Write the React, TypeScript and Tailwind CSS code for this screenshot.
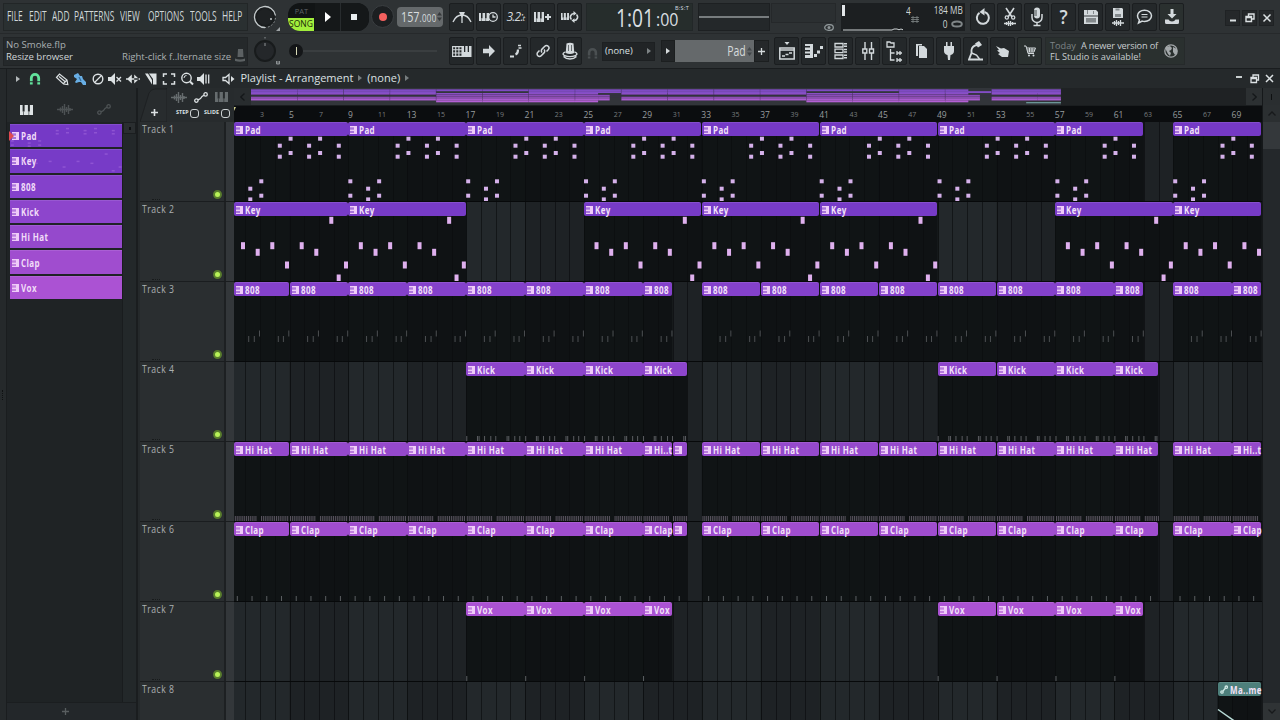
import type { ReactNode } from 'react'
import { clsx } from 'clsx'

const BAR = 14.73
const GRID_W = 1028
const barX = (bar: number) => (bar - 1) * BAR - 3.4

type Clip = [start: number, end: number, label?: string]
type Note = [x: number, y: number]
interface Track {
  name: string
  color: string
  header: string
  clips: Clip[]
  notes: Note[]
  size: Note
  noteColor: string
}

// four-bar clips from start, the last one cut at end
function run(start: number, end: number): Clip[] {
  const out: Clip[] = []
  for (let b = start; b < end; b += 4) out.push([b, Math.min(b + 4, end)])
  return out
}

const padNotes: Note[] = [
  [1.9, 59.3], [1.9, 73.7], [19.7, 66.7], [19.7, 77.4], [30.7, 59.3], [30.7, 73.7],
  [49.2, 23.7], [49.2, 34.7], [60, 16.7], [60, 31], [78.5, 23.7], [78.5, 34.7],
  [89.5, 16.7], [89.5, 31], [108.2, 23.7], [108.2, 34.7],
]
const keyNotes: Note[] = [
  [12.4, 43.7], [27.1, 50.3], [41.7, 43.7], [56.4, 63], [71.1, 43.7],
  [85.7, 50.3], [100.7, 18.3], [108.1, 76], [115.4, 63],
]
const bassNotes: Note[] = [[18.1, 57], [23.7, 57], [28.9, 51.5], [47.7, 57], [52.8, 57], [58.2, 51.5]]
const kickNotes: Note[] = [0.5, 11.2, 12.8, 18.3, 24.5, 29.5, 40.8, 42.5, 48.5, 53.5].map(x => [x, 76.5])
const hatNotes: Note[] = Array.from({ length: 31 }, (_, i): Note => [1 + i * 1.87, 76.5]).filter(([x]) => x < 27 || x > 29.5)
const clapNotes: Note[] = [0, 1, 2, 3].map(i => [6.7 + i * BAR, 76.5])

const hatClips: Clip[] = [
  ...run(1, 29), [29, 31, 'Hi..t'], [31, 32, ''], ...run(33, 64), [65, 69], [69, 71, 'Hi..t'],
]
const clapClips: Clip[] = hatClips.map(([s, e, l]) => [s, e, l === 'Hi..t' ? 'Clap' : l])

const tracks: Track[] = [
  { name: 'Pad', color: '#7f4bc4', header: 'bg-[#7539c6]', clips: [[1, 9], [9, 17], [17, 25], [25, 33], [33, 41], [41, 49], [49, 57], [57, 63], [65, 71]], notes: padNotes, size: [4, 4], noteColor: '#d5b1ea' },
  { name: 'Key', color: '#824dc6', header: 'bg-[#773bc7]', clips: [[1, 9], [9, 17], [25, 33], [33, 41], [41, 49], [57, 65], [65, 71]], notes: keyNotes, size: [4, 7], noteColor: '#dfb0ee' },
  { name: '808', color: '#8a4fc6', header: 'bg-[#8441cb]', clips: [...run(1, 31), ...run(33, 63), [65, 69], [69, 71]], notes: bassNotes, size: [1, 6], noteColor: '#4c4f52' },
  { name: 'Kick', color: '#9a53cc', header: 'bg-[#8d45cc]', clips: [...run(17, 32), ...run(49, 64)], notes: kickNotes, size: [1, 5], noteColor: '#5b5d61' },
  { name: 'Hi Hat', color: '#a156cd', header: 'bg-[#9549cc]', clips: hatClips, notes: hatNotes, size: [1, 5], noteColor: '#5a5560' },
  { name: 'Clap', color: '#aa5bd0', header: 'bg-[#a04dcf]', clips: clapClips, notes: clapNotes, size: [1, 5], noteColor: '#5b5f62' },
  { name: 'Vox', color: '#b360d4', header: 'bg-[#ab52d3]', clips: [...run(17, 31), ...run(49, 63)], notes: [[0.5, 76.5]], size: [1, 5], noteColor: '#5b5f62' },
]

const master: Track = { name: 'Ma..me', color: '#7fb5b5', header: 'bg-[#4d7f7b]', clips: [[68, 71]], notes: [], size: [1, 1], noteColor: '#fff' }

function Svg({ w = 18, h = 18, children, className }: { w?: number; h?: number; children: ReactNode; className?: string }) {
  return (
    <svg width={w} height={h} viewBox={`0 0 ${w} ${h}`} fill="none" stroke="currentColor" strokeWidth="1.3" className={clsx('shrink-0', className)}>
      {children}
    </svg>
  )
}

const solid = { fill: 'currentColor', stroke: 'none' }

function Magnet({ className, w = 13 }: { className?: string; w?: number }) {
  return (
    <svg width={w} height={w} viewBox="0 0 13 13" fill="none" stroke="currentColor" strokeWidth="3" className={className}>
      <path d="M2.5 9V5.5a4 4 0 0 1 8 0V9" />
      <path d="M2.5 10v2.4M10.5 10v2.4" />
    </svg>
  )
}

function Piano({ w = 13, h = 10 }: { w?: number; h?: number }) {
  return (
    <svg width={w} height={h} viewBox="0 0 13 10" preserveAspectRatio="none" fill="currentColor" className="shrink-0">
      <path d="M0 0h2.600v6.500h2V0h3.300v6.500h2V0H13v10H0z" />
      <path d="M3.300 6.500h.6V10h-.6zM8.600 6.500h.6V10h-.6z" fill="#25292b" />
    </svg>
  )
}

function Wave() {
  return (
    <Svg w={16} h={11}>
      <path d="M0 5.5h16M3.5 3.5v4M5.5 2v7M7.5 0v11M9.5 3v5M11.5 1v9M13 4v3" strokeWidth="1.4" />
    </Svg>
  )
}

function Automation() {
  return (
    <Svg w={14} h={11}>
      <circle cx="2.4" cy="8.6" r="1.7" />
      <circle cx="11.6" cy="2.4" r="1.7" />
      <path d="M4 7.8l2.5-1.2 1.5-2.2L10 3.3" />
    </Svg>
  )
}

function PatternIcon() {
  return (
    <svg width="7" height="8" viewBox="0 0 7 8" className="shrink-0" fill="#efccf8">
      <path d="M0 0h7v8H0V7h4V5H0V3.500h4V1.500H0z" />
      <path d="M0 1.500h4v2H0zM0 5h4v2H0z" opacity="0.400" />
    </svg>
  )
}

function ToolButton({ children, green }: { children: ReactNode; green?: boolean }) {
  return (
    <div className={clsx('w-[25px] h-[28px] shrink-0 flex items-center justify-center rounded-[2px] border border-[#1b1e20] text-[#d3d9dc]', green ? 'bg-[#2a302f]' : 'bg-[#24282a]')}>
      {children}
    </div>
  )
}

function MenuBar() {
  const items: [string, string][] = [
    ['FILE', 'w-[22px]'], ['EDIT', 'w-[23px]'], ['ADD', 'w-[22px]'], ['PATTERNS', 'w-[46px]'],
    ['VIEW', 'w-[27.5px]'], ['OPTIONS', 'w-[42px]'], ['TOOLS', 'w-[32.5px]'], ['HELP', 'w-[22px]'],
  ]
  return (
    <div className="w-[245px] h-[28px] ml-[3px] pl-[3px] pb-[2px] shrink-0 flex items-center bg-[#2a3031] border border-[#222627] text-[#d0d7d9]">
      {items.map(([label, width]) => (
        <div key={label} className={clsx('shrink-0', width)}>
          <span className="block w-max origin-left scale-x-[0.6] text-[14px] leading-4 whitespace-nowrap">{label}</span>
        </div>
      ))}
    </div>
  )
}

function Transport() {
  return (
    <div className="w-[81px] h-[28px] ml-[14px] shrink-0 flex rounded-[12px] overflow-hidden bg-[#111415] text-white">
      <div className="w-[27px] flex flex-col">
        <div className="h-[15px] pt-[2px] text-center text-[7.5px] leading-[12px] text-[#5d6265]">PAT</div>
        <div className="h-[13px] w-[26px] rounded-bl-[9px] bg-[#a2ee3c] text-center text-[8.5px] leading-[12px] text-[#1c2a08]">SONG</div>
      </div>
      <div className="w-[26px] flex items-center justify-center border-r border-[#282c2e] bg-[#151819]">
        <Svg w={6} h={10}><path d="M0 0l6 5-6 5z" {...solid} /></Svg>
      </div>
      <div className="flex-1 flex items-center justify-center bg-[#151819]">
        <div className="w-[6px] h-[6px] bg-[#e8edef] -ml-[2px]" />
      </div>
    </div>
  )
}

function TopRow() {
  return (
    <div className="h-[34px] flex items-center border-b border-[#26292b]">
      <MenuBar />
      <div className="w-[35px] ml-[1px] shrink-0 flex justify-center items-center">
        <Svg w={30} h={30} className="text-[#c2c8ca] -ml-[3px]">
          <circle cx="15" cy="15" r="9" fill="#1e2123" stroke="#191c1d" strokeWidth="2" />
          <path d="M15 25.500A10.500 10.500 0 1 1 25.300 13" strokeWidth="1.300" />
          <path d="M15 25.500A10.500 10.500 0 0 0 25.300 13" strokeWidth="1" strokeDasharray="1 2.500" />
          <path d="M20 17h2" strokeWidth="1.500" />
          <path d="M30 25v4h-4z" {...solid} fill="#9da2a4" />
        </Svg>
      </div>
      <div className="-ml-[10px]"><Transport /></div>
      <div className="w-[23px] h-[23px] ml-[2px] shrink-0 rounded-full bg-[#1c1f21] border border-[#3b3f42] flex items-center justify-center">
        <div className="w-2 h-2 rounded-full bg-[#f4605e]" />
      </div>
      <div className="w-[46px] h-[20px] ml-[3px] shrink-0 rounded-[4px] bg-[#65696b] flex items-center pl-1 text-[#d7dcde]">
        <span className="inline-block w-[36px] shrink-0">
          <span className="block w-max origin-left scale-x-[0.72] text-[15px] leading-5 whitespace-nowrap">157<span className="text-[11px] tracking-[0.5px]">.000</span></span>
        </span>
        <Svg w={5} h={9} className="text-[#36393b]"><path d="M0 3.500L2.500 0 5 3.500zM0 5.500L2.500 9 5 5.500z" {...solid} /></Svg>
      </div>
      <div className="flex gap-[2px] ml-[6px]">
        <ToolButton>
          <Svg w={20} h={14}><path d="M1 12q3-7 9-7t9 7M10 5v8" /><path d="M7 2h6l-3 6z" {...solid} /></Svg>
        </ToolButton>
        <ToolButton>
          <div className="flex items-center"><Piano w={10} h={8} /><Svg w={10} h={12} className="-ml-[1px]"><circle cx="5" cy="6" r="4.300" /><path d="M5 3.500V6h2.500" /></Svg></div>
        </ToolButton>
        <ToolButton><span className="text-[12px] italic tracking-[-0.8px]">3.2:<span className="text-[8px]">t</span></span></ToolButton>
        <ToolButton>
          <div className="flex items-center"><Piano w={10} h={10} /><Svg w={8} h={8}><path d="M4 1v6M1 4h6" strokeWidth="2" /></Svg></div>
        </ToolButton>
        <ToolButton>
          <div className="flex items-center"><Piano w={8} h={7} /><Svg w={10} h={12}><path d="M2.500 8.500A3.500 3.500 0 0 1 5 2.500M7.500 3.500A3.500 3.500 0 0 1 5 9.500" strokeWidth="1.600" /><path d="M4.500 0l3 2.400-3 2.300zM5.500 12l-3-2.400 3-2.300z" {...solid} /></Svg></div>
        </ToolButton>
      </div>
      <div className="w-[107px] h-[28px] ml-[4px] shrink-0 bg-[#262d2c] border border-[#222728] text-[#d9dfe1] flex items-center pl-[29px]">
        <div className="w-[41px] shrink-0"><span className="block w-max origin-left scale-x-[0.74] text-[26px] leading-7 whitespace-nowrap">1:01</span></div>
        <div className="w-[19px] -ml-px mt-[4px] shrink-0"><span className="block w-max origin-left scale-x-[0.84] text-[19px] leading-6 whitespace-nowrap">:00</span></div>
        <div className="self-start text-[5.5px] leading-[9px] shrink-0 tracking-[0.3px]">B:S:T</div>
      </div>
      <div className="w-[72px] h-[28px] ml-[5px] shrink-0 bg-[#24282a] border border-[#1d2022] flex items-center"><div className="h-[2px] w-full bg-[#777c7e]" /></div>
      <div className="w-[65px] h-[28px] ml-[1px] shrink-0 flex flex-col items-end">
        <div className="w-full h-[20px] border border-[#25282a] bg-[#2b2f31]" />
        <Svg w={10} h={7} className="mr-[2px] mt-[1px] text-[#8e9698]"><ellipse cx="5" cy="3.500" rx="4.300" ry="2.900" /><circle cx="5" cy="3.500" r="1.500" {...solid} /></Svg>
      </div>
      <div className="w-[124px] h-[28px] ml-[5px] shrink-0 bg-[#1c1f21] flex text-[#ced4d6]">
        <div className="w-[64px] shrink-0">
          <div className="w-[3px] h-[11px] mt-[2px] ml-[1px] bg-[#e2e6e8]" />
          <Svg w={64} h={14} className="mt-[1px]"><path d="M2 13h49l2-1h3l2 .8 2-.8 2 .8" strokeWidth="1" /></Svg>
        </div>
        <div className="w-[14px] shrink-0 pt-[1px] text-[11px] leading-[13px]"><span className="block w-max ml-px origin-left scale-x-75">4</span>
          <Svg w={8} h={7} className="ml-[6px] -mt-[1px] text-[#7f8587]"><path d="M0 1.500h8M0 3.500h8M0 5.500h8M2 0v7M6 0v7" strokeWidth="0.8" /></Svg>
        </div>
        <div className="flex-1 flex flex-col items-end pr-[2px] text-[11px] leading-[14px]">
          <span className="block w-max origin-right scale-x-[0.75] whitespace-nowrap">184 MB</span>
          <span className="flex items-center gap-[3px]"><span className="scale-x-75">0</span><Svg w={12} h={8} className="text-[#7f8587]"><ellipse cx="6" cy="4" rx="4.800" ry="2.500" strokeWidth="2" /></Svg></span>
        </div>
      </div>
      <div className="flex gap-[2px] ml-[5px]">
        <ToolButton><Svg w={16} h={18}><path d="M4.500 4.800A6 6 0 1 0 9.500 4" strokeWidth="2" /><path d="M9.500 0v7.500L4.500 4z" {...solid} /></Svg></ToolButton>
        <ToolButton><Svg w={14} h={20}><path d="M3 1l6 9M11 1L5 10" strokeWidth="1.600" /><circle cx="3.800" cy="10.500" r="1.600" /><circle cx="10.200" cy="10.500" r="1.600" /><path d="M1 16.500h12M3.500 15v3M5.500 14v5M7.500 14v5M9.500 15v3" /></Svg></ToolButton>
        <ToolButton><Svg w={12} h={20}><rect x="3" y="0.500" width="6" height="11" rx="3" {...solid} /><path d="M1 7v3.500a5 5 0 0 0 10 0V7M6 15v3M2.500 18.500h7" strokeWidth="1.500" /><path d="M3 4h3M3 6h3M3 8h3" stroke="#24282a" strokeWidth="0.800" /></Svg></ToolButton>
        <ToolButton><span className="text-[20px] font-semibold leading-none scale-x-90">?</span></ToolButton>
        <ToolButton><Svg w={16} h={16}><path d="M1 1h12l2 2v12H1z" {...solid} /><path d="M4 1h1v4H4zM10 2h1v3h-1zM3 9h10v4.500H3z" fill="#83898c" stroke="none" /><path d="M1 7h14" stroke="#5b6164" /></Svg></ToolButton>
        <ToolButton><Svg w={14} h={20}><path d="M2 1h9l1 1v9H2z" {...solid} /><path d="M4.500 1.500h4v2h-4zM4 7h6v3H4z" fill="#83898c" stroke="none" /><path d="M1 16h12M3.500 14v4M5.500 13v6M7.500 14v4M9.500 13v6" /></Svg></ToolButton>
        <ToolButton><Svg w={17} h={16}><path d="M8.500 1.200c4 0 7 2.400 7 5.600s-3 5.600-7 5.600c-.8 0-1.600-.1-2.300-.3L2.500 14l.9-3C2.200 10 1.500 8.500 1.500 6.800c0-3.200 3-5.600 7-5.600z" strokeWidth="1.500" /><path d="M5.500 5.500h6M5.500 8h6" strokeWidth="1.100" /></Svg></ToolButton>
        <ToolButton green><Svg w={16} h={17}><path d="M6.500 1h3v5h3L8 10.500 3.500 6h3zM1 11.500h3.500q1 2 3.500 2t3.500-2H15v3q0 1.500-1.500 1.500h-11Q1 16 1 14.500z" {...solid} /></Svg></ToolButton>
      </div>
      <div className="flex gap-[2px] ml-[41px] mt-[2px]">
        {[<path key="a" d="M4 9.500h6" strokeWidth="2" />, <path key="b" d="M5.500 5V3h5.500v5h-2M3 5.500h5.500v5H3zM3 6.500h5.500" strokeWidth="1.400" />, <path key="c" d="M3.500 3.500l7 7M10.500 3.500l-7 7" strokeWidth="1.500" />].map((icon, i) => (
          <div key={i} className="w-[15px] h-[16px] bg-[#25282a] border border-[#1f2224] text-[#dbe0e2] flex items-center justify-center"><Svg w={14} h={14}>{icon}</Svg></div>
        ))}
      </div>
    </div>
  )
}

function SecondRow() {
  return (
    <div className="h-[34px] flex items-center">
      <div className="w-[245px] h-[29px] ml-[3px] pl-[2px] shrink-0 bg-[#25292b] border border-[#212426] text-[9.6px] leading-[12px] text-[#a9afb1]">
        <div className="pt-[1px]">No Smoke.flp</div>
        <div className="flex items-center">
          <span className="text-[#d0d5d7] tracking-[-0.05px]">Resize browser</span>
          <span className="ml-auto tracking-[-0.05px]">Right-click f..lternate size</span>
          <Svg w={12} h={13} className="ml-[3px] mr-[1px] -mt-[3px] text-[#5c6163]"><path d="M4 0h5l.5 8h-6zM1 9.500q5 2 10 0V12q-5 1.500-10 0z" {...solid} /></Svg>
        </div>
      </div>
      <div className="w-[36px] shrink-0 flex justify-center">
        <Svg w={30} h={30} className="text-[#8d9294]">
          <circle cx="14" cy="15" r="10" fill="#24272a" stroke="#181b1c" strokeWidth="2" />
          <path d="M14 7v3M14 1v1.500M25.500 25v3h3v-3M27 25v3" strokeWidth="1" />
        </Svg>
      </div>
      <div className="w-[165px] shrink-0 flex items-center pl-[5px]">
        <div className="w-[14px] h-[14px] shrink-0 rounded-full bg-[#141618] flex items-center justify-center"><div className="w-px h-[8px] bg-[#d9dbb8]" /></div>
        <div className="h-[2px] w-[134px] bg-[#3a3e40]" />
      </div>
      <div className="flex gap-[2px]">
        <ToolButton><Svg w={20} h={13}><path d="M.6 1.600h9.400v9.800H.6zM.6 4.800H10M.6 8H10M3.700 1.600v9.800M6.900 1.600v9.800" strokeWidth="1.100" /><path d="M10 1h2v6h1.300V1h2.400v6H17V1h2.500v11H10z" {...solid} /></Svg></ToolButton>
        <ToolButton><Svg w={12} h={12}><path d="M0 3.800h6V0l6 6-6 6V8.200H0z" {...solid} /></Svg></ToolButton>
        <ToolButton><Svg w={14} h={14}><path d="M1 12.500h4M6.500 10.500q2.500-1 2.500-5" strokeWidth="2.200" /><path d="M9 1.500h3M9.500 4h3" strokeWidth="1.500" /></Svg></ToolButton>
        <ToolButton><Svg w={14} h={14}><path d="M6 8.500a2.400 2.400 0 0 1 0-3.400l2.800-2.800a2.400 2.400 0 0 1 3.400 3.400L10.500 7.500M8 5.500a2.400 2.400 0 0 1 0 3.400l-2.800 2.800a2.400 2.400 0 0 1-3.400-3.400l1.700-1.800" strokeWidth="1.500" /></Svg></ToolButton>
        <ToolButton><Svg w={16} h={18}><path d="M4.500 1.500q3.500-1.500 7 0l.8 9.500q-4.300 1.800-8.600 0z" {...solid} /><path d="M3.500 9.800Q1 10.500 1 12q1 2.600 7 2.600t7-2.600q0-1.500-2.500-2.200M1.500 14.500Q4 17 8 17t6.500-2.500" strokeWidth="1.400" /><path d="M6.500 3v6M9.500 3v6" stroke="#686e70" strokeWidth="1" /></Svg></ToolButton>
      </div>
      <Magnet w={11} className="ml-[5px] mt-[4px] shrink-0 text-[#4b5052]" />
      <div className="w-[53px] h-[19px] ml-[4px] shrink-0 bg-[#212426] border border-[#1d2022] flex items-center justify-between pl-[2px] pr-[3px] pb-px text-[9.3px] text-[#dbe0e2]">(none)<Svg w={4} h={6} className="text-[#7d8385]"><path d="M0 0l4 3-4 3z" {...solid} /></Svg></div>
      <div className="w-[108px] h-[22px] ml-[6px] shrink-0 flex text-[#d5dadc]">
        <div className="w-[14px] bg-[#222527] border border-[#1c1f20] flex items-center justify-center"><Svg w={4} h={6}><path d="M0 0l4 3-4 3z" {...solid} /></Svg></div>
        <div className="flex-1 bg-[#65696b] flex items-center justify-end pr-[2px]">
          <span className="block w-max origin-right scale-x-[0.75] text-[14px] leading-5">Pad</span>
          <Svg w={5} h={9} className="ml-px text-[#43474a]"><path d="M0 3.500L2.500 0 5 3.500zM0 5.500L2.500 9 5 5.500z" {...solid} /></Svg>
        </div>
        <div className="w-[15px] bg-[#25282a] border border-[#1c1f20] flex items-center justify-center"><Svg w={7} h={7}><path d="M3.500 0v7M0 3.500h7" /></Svg></div>
      </div>
      <div className="flex gap-[2px] ml-[5px]">
        <ToolButton><Svg w={16} h={18}><path d="M5.500 0h5L8 3z" {...solid} /><path d="M.8 6h14.400v11H.8zM.8 8h14.400" strokeWidth="1.500" /><path d="M3 14h3M6.500 12.500h3M10 11h3" strokeWidth="1.500" /></Svg></ToolButton>
        <ToolButton><Svg w={18} h={14}><path d="M0 0h8v14H0v-3h5V9.500H0v-2h5V6H0V3.500h5V2H0zM9 10h3v3H9zM12 6.500h3v3h-3zM15 2h3v3h-3z" {...solid} /></Svg></ToolButton>
        <ToolButton><Svg w={14} h={18}><path d="M1 1.500h8v3.500H1zM1 7.200h8v3.500H1zM1 13h8v3.500H1z" /><path d="M11.500 1v4.500M11.500 6.700v4.500M11.500 12.500V17" strokeWidth="3" strokeDasharray="1.500 1" /></Svg></ToolButton>
        <ToolButton><Svg w={14} h={20}><path d="M4 1v7M4 12v7M10.500 1v7M10.500 12v7M1.800 8h4v4h-4zM8.500 8h4v4h-4z" strokeWidth="1.400" /></Svg></ToolButton>
        <ToolButton><Svg w={17} h={21}><path d="M1 6V1h3l1 1h3v4zM4.500 8v11h4M4.500 12h4M11 10v4M11 12h5M14 10v4M11 17v4M11 19h5M14 17v4" /></Svg></ToolButton>
        <ToolButton><Svg w={13} h={16}><path d="M4 3h5l3 3v9H4z" {...solid} /><path d="M1 13V1h6v1.500H3V13z" {...solid} /></Svg></ToolButton>
        <ToolButton><Svg w={12} h={18}><path d="M3 0h1.500v4H3zM7.500 0H9v4H7.500zM1 4h10v5q0 3-3.500 4L7 18H5l-.5-5Q1 12 1 9z" {...solid} /></Svg></ToolButton>
        <ToolButton><Svg w={16} h={20}><path d="M7 2.500L11 0l3 4-4 2.500z" {...solid} /><path d="M9 4Q4 5 3.500 9v3L1 18.500h14" strokeWidth="1.800" /><path d="M3.500 12l5 2 3 4" strokeWidth="1.500" /></Svg></ToolButton>
        <ToolButton><Svg w={14} h={13}><path d="M0 1l5 2.500L8 3l5 3-1 6H6L2 9l2-1-3-2.500 2-.5z" {...solid} /></Svg></ToolButton>
        <ToolButton green><Svg w={12} h={12}><path d="M0 1h2l2 7.500h6M3 3h8.500L10 7H4M5.500 3v4M8 3v4M3 5h8" strokeWidth="1" /><circle cx="5" cy="10.500" r="1" {...solid} /><circle cx="9.500" cy="10.500" r="1" {...solid} /></Svg></ToolButton>
      </div>
      <div className="w-[140px] h-[28px] ml-[3px] shrink-0 flex items-center border border-[#262a2b] bg-[#2a302f] pl-1 text-[9.2px] leading-[11.5px] text-[#c8cdcf]">
        <div className="w-[112px] shrink-0 whitespace-nowrap"><span className="text-[#7e8486] mr-[5px]">Today</span><span className="tracking-[-0.15px]">A newer version of</span><br />FL Studio is available!</div>
        <Svg w={14} h={14} className="ml-[2px] text-[#a3a8aa]"><circle cx="7" cy="7" r="6.200" /><path d="M2 3l4-1 2 2-1 2-2 1 2 2-1 3-2-2-2-4zM9 3l4 2v4l-2 2-2-3z" {...solid} /></Svg>
      </div>
    </div>
  )
}

function TitleBar() {
  return (
    <div className="h-[19px] shrink-0 flex items-center pl-[9px] text-[#dce1e3]">
      <Svg w={4} h={6} className="mr-[9px] text-[#b3b8ba]"><path d="M0 0l4 3-4 3z" {...solid} /></Svg>
      <Magnet w={12} className="text-[#62e29c] mr-[14px]" />
      <div className="flex items-center gap-[3.8px]">
        <Svg w={14} h={14}><path d="M1.500 5.500L4.500 2l7.500 6 .8 4.500-4.300-.5zM4 4.500l6.500 5.500M8 12l4-4" strokeWidth="1.200" /></Svg>
        <Svg w={14} h={14} className="text-[#68aee4]"><path d="M1 3l4-2 2 3 2 0 1 3 3 3v3h-3L8 10H6l-3 1-1-1 2-3-3-2z" {...solid} /><path d="M6 5l2 4" stroke="#356c9c" /></Svg>
        <Svg w={14} h={14}><circle cx="7" cy="7" r="4.800" strokeWidth="1.400" /><path d="M10.500 3.500l-7 7" /></Svg>
        <Svg w={14} h={14}><path d="M0 5h3l4-4v12L3 9H0z" {...solid} /><path d="M8.500 5l4.500 4.500M13 5L8.500 9.500" /></Svg>
        <Svg w={14} h={14}><path d="M5.800 2.500v9L1 7zM8.200 2.500v9L13 7zM0 6.200h14v1.600H0z" {...solid} /></Svg>
        <Svg w={14} h={14}><path d="M1 1.500h3L8 8v4.500zM5 1.500h7.500v11H9V7z" {...solid} /></Svg>
        <Svg w={14} h={14}><path d="M1.500 5V2H5M9 2h3.500v3M12.500 9v3H9M5 12H1.500V9" strokeWidth="1.500" /></Svg>
        <Svg w={14} h={14}><circle cx="6.500" cy="6" r="4.700" strokeWidth="1.400" /><path d="M4 6a2.500 2.500 0 0 1 2.500-2.500" strokeWidth="1" /><path d="M10 9.500l3 3" strokeWidth="2" /></Svg>
        <Svg w={14} h={14}><path d="M0 5h3l4-4v12L3 9H0z" {...solid} /><path d="M9 2.500v9M11.700 2.500v9" strokeWidth="1.300" /></Svg>
      </div>
      <Svg w={13} h={12} className="ml-[11px] mr-[5px]"><path d="M1 4.500h2.500L7 1.500v9L3.500 7.500H1z" /><path d="M9 3l3.500 3L9 9z" {...solid} /></Svg>
      <div className="flex items-center gap-[5px] text-[11px] leading-4 pb-px whitespace-nowrap">
        <span>Playlist - Arrangement</span>
        <Svg w={4} h={6} className="text-[#777d7f]"><path d="M0 0l4 3-4 3z" {...solid} /></Svg>
        <span>(none)</span>
        <Svg w={4} h={6} className="text-[#777d7f]"><path d="M0 0l4 3-4 3z" {...solid} /></Svg>
      </div>
      <div className="ml-auto mr-[5px] flex items-center gap-[4px]">
        <Svg w={11} h={11}><path d="M2 4h6" strokeWidth="1.800" /></Svg>
        <Svg w={11} h={11}><path d="M4 4V2h5.500v5h-2M2 4.500h5.500v5H2zM2 5.500h5.500" /></Svg>
        <Svg w={11} h={11}><path d="M2 2l7 7M9 2L2 9" strokeWidth="1.500" /></Svg>
      </div>
    </div>
  )
}

function Browser() {
  return (
    <div className="w-[131px] shrink-0 flex flex-col border-r-2 border-[#1a1d1f]">
      <div className="h-[34px] shrink-0 flex items-end pb-[7px] pl-[13px] gap-[24px] text-[#4d5254]">
        <span className="text-[#dde2e4]"><Piano /></span>
        <Wave />
        <Automation />
      </div>
      <div className="flex-1 flex min-h-0 bg-[#1f2325]">
        <div className="w-[116px] pl-[3px] pt-[2px] shrink-0 flex flex-col gap-[2px] border-r border-[#191c1e]">
          {tracks.map((t, i) => (
            <div key={t.name} className={clsx('h-[23.3px] shrink-0 w-[112px] pl-[1.5px] flex items-center gap-[2.5px] relative text-[#f1dcf8] border-t border-white/10', t.header)}>
              <PatternIcon />
              <ClipLabel>{t.name}</ClipLabel>
              {i === 0 && <div className="absolute -left-[1px] top-[6px] border-y-[5px] border-y-transparent border-l-[5px] border-l-[#e04a52]" />}
              {i < 2 && (
                <svg width="112" height="23" viewBox="0 0 112 23" fill="#a76ddf" opacity="0.5" className="absolute left-0 top-0">
                  {t.notes.map(([x, y], n) => <rect key={n} x={x * 0.95 - 1} y={y * 0.29 - 2} width="3" height="1.500" />)}
                </svg>
              )}
            </div>
          ))}
        </div>
        <div className="flex-1 bg-[#23282a]">
          <div className="h-[12px] bg-[#2a2e30] border border-[#1b1e20] flex items-center justify-center"><div className="w-[2px] h-[3px] bg-[#0f1112]" /></div>
        </div>
      </div>
      <div className="h-[18px] shrink-0 flex items-center justify-center bg-[#23272a] border-t border-[#1b1e20] text-[#595e60]"><Svg w={7} h={7} className="-ml-[12px]"><path d="M3.500 0v7M0 3.500h7" /></Svg></div>
    </div>
  )
}

function ClipLabel({ children }: { children: ReactNode }) {
  return <span className="block w-max origin-left scale-x-[0.76] text-[10.5px] leading-[12px] font-bold tracking-[0.5px] whitespace-nowrap">{children}</span>
}

function TrackHeaders() {
  return (
    <div className="w-[95px] shrink-0 flex flex-col">
      <div className="h-[34px] shrink-0 flex text-[#dce1e3]">
        <div className="w-[27px] border-r border-[#1b1e20] relative flex items-end justify-center pb-[6px] pl-[3px]">
          <svg width="27" height="34" viewBox="0 0 27 34" className="absolute left-0 top-0"><path d="M0 34L9 5q2-4 6-4h12v33z" fill="#282c2e" stroke="#1e2123" /></svg>
          <Svg w={7} h={7} className="relative"><path d="M3.500 0v7M0 3.500h7" strokeWidth="1.600" /></Svg>
        </div>
        <div className="flex-1 bg-[#272b2d]">
          <div className="h-[18px] flex items-center justify-between pl-[4px] pr-[7px]">
            <span className="text-[#666c6e]"><Wave /></span><Automation /><span className="text-[#666c6e]"><Piano w={13} h={10} /></span>
          </div>
          <div className="h-[14px] flex items-center pl-[9px] text-[5.3px] font-bold tracking-[0.1px]">
            <span className="w-[14px] shrink-0">STEP</span>
            <div className="w-[9px] h-[9px] shrink-0 rounded-[3px] border border-[#ccd1d3]" />
            <span className="w-[17px] shrink-0 ml-[5px]">SLIDE</span>
            <div className="w-[9px] h-[9px] shrink-0 rounded-[3px] border border-[#ccd1d3]" />
          </div>
        </div>
      </div>
      {Array.from({ length: 8 }, (_, i) => (
        <div key={i} className="h-[80px] shrink-0 flex border-b border-[#1a1d1f]">
          <div className="w-[86px] relative bg-[#2a2e30] border-r-2 border-[#1d2022] pl-[2px] text-[#aab0b2] shrink-0">
            <span className="block w-max origin-left scale-x-[0.82] text-[10.5px] leading-[15px] font-medium tracking-[0.6px]">Track {i + 1}</span>
            <div className="absolute right-[2px] top-[68px] w-[9px] h-[9px] rounded-full bg-[#b8f258] border-2 border-[#587c2c]" />
            <div className="absolute left-[12px] top-[77px] w-[8px] border-t border-dotted border-[#181b1c]" />
          </div>
          <div className="flex-1 bg-[#33373a]" />
        </div>
      ))}
    </div>
  )
}

function MiniMap() {
  return (
    <div className="h-[17px] shrink-0 flex bg-[#1f2224]">
      <div className="w-[17px] bg-[#282c2e] flex items-center justify-center text-[#15181a]"><Svg w={5} h={8}><path d="M4.500.5L.8 4l3.700 3.500" /></Svg></div>
      <svg width="995" height="17" viewBox="0 0 995 17" className="shrink-0">
        <rect width="810" height="17" fill="#32353a" />
        {[...tracks, master].map((t, row) =>
          t.clips.map(([s, e]) => (
            <rect key={`${row}-${s}`} x={(s - 1) * 11.57} y={1.3 + row * 1.85} width={(e - s) * 11.57} height={row === 7 ? 1 : 1.9} fill={t.color} />
          )),
        )}
        <path d="M0 6.800h810M0 8.900h810" stroke="#3b2d4d" strokeWidth="0.500" />
        {[5, 9, 13, 17, 21, 25, 29, 33, 37, 41, 45, 49, 53, 57, 61, 65].map(b => (
          <path key={b} d={`M${(b - 1) * 11.57} 1.300v${b % 8 === 1 ? 11 : 11}`} stroke="#3b2d4d" strokeWidth="0.500" opacity="0.600" />
        ))}
      </svg>
      <div className="flex-1 bg-[#2c3032] flex items-center justify-center text-[#15181a]"><Svg w={5} h={8}><path d="M.5.5L4.200 4 .5 7.500" /></Svg></div>
    </div>
  )
}

function Ruler() {
  return (
    <div className="h-[17px] shrink-0 relative overflow-hidden bg-[#0b0d0f] border-t border-[#1a1d1f]">
      <div className="absolute left-0 top-[1px] border-t-[4px] border-t-[#c9c88a] border-r-[2px] border-r-transparent" />
      {Array.from({ length: 34 }, (_, i) => 3 + i * 2).map(bar => (
        <span
          key={bar}
          className={clsx('absolute top-[2px] w-5 text-center leading-[13px]', bar % 4 === 1 ? 'text-[8.5px] text-[#989d9f]' : 'text-[7px] text-[#777c7e]')}
          style={{ left: barX(bar) - (bar < 10 ? 8 : 5.8) }}
        >
          {bar}
        </span>
      ))}
    </div>
  )
}

function Lane({ track }: { track: Track }) {
  return (
    <div className="h-[80px] shrink-0 relative overflow-hidden">
      <svg width={GRID_W} height="80" viewBox={`0 0 ${GRID_W} 80`} className="block">
        {Array.from({ length: 18 }, (_, i) => (
          <rect key={i} x={barX(1 + i * 4)} y="0" width={BAR * 4} height="80" fill={i % 2 ? '#1e2225' : '#23282b'} />
        ))}
        {track.clips.map(([s, e]) => (
          <rect key={s} x={barX(s)} y="0" width={(e - s) * BAR} height="80" fill="#080b0d" opacity="0.7" />
        ))}
        {Array.from({ length: 71 }, (_, i) => (
          <path key={i} d={`M${Math.round(barX(1 + i)) + 0.5} 0v80`} stroke="#0a0d0e" strokeOpacity={i % 4 ? 0.65 : 0.8} />
        ))}
        {track.clips.map(([s, e]) =>
          track.notes
            .filter(([x]) => x < (e - s) * BAR && barX(s) + x > 0)
            .map(([x, y], n) => (
              <rect key={`${s}-${n}`} x={barX(s) + x - track.size[0] / 2} y={y - track.size[1] / 2} width={track.size[0]} height={track.size[1]} fill={track.noteColor} />
            )),
        )}
        {track === master && <path d="M984 27.500l20 14" stroke="#b9dcd8" strokeWidth="1.500" />}
        <path d={`M0 79.500h${GRID_W}`} stroke="#07090a" />
      </svg>
      {track.clips.map(([s, e, label]) => {
        const left = Math.max(0, barX(s))
        return (
          <div
            key={s}
            className={clsx('absolute top-0 h-[14px] pl-[2px] flex items-center gap-[2px] rounded-[2px] border-t border-white/10 text-[#f3e2f8]', track.header)}
            style={{ left, width: Math.min(GRID_W, barX(e)) - left - 0.5 }}
          >
            {track === master ? <Svg w={8} h={9} className="text-[#cfe8e4]"><circle cx="2" cy="7" r="1.200" /><circle cx="6.300" cy="2.200" r="1.200" /><path d="M3 6l2.500-3" /></Svg> : <PatternIcon />}
            <ClipLabel>{label ?? track.name}</ClipLabel>
          </div>
        )
      })}
    </div>
  )
}

function ScrollColumn() {
  return (
    <div className="flex-1 flex flex-col bg-[#24282b] border-l border-[#15181a] text-[#17191b]">
      <div className="h-[17px] shrink-0 bg-[#2a2e30] flex items-center justify-center"><div className="w-px h-[6px] bg-[#0e1011]" /></div>
      <div className="h-[17px] shrink-0 bg-[#2b2f31] flex items-center justify-center"><Svg w={8} h={5}><path d="M.5 4.500L4 1l3.500 3.500" /></Svg></div>
      <div className="h-[27px] shrink-0 bg-[#34383b]" />
      <div className="mt-auto h-[17px] shrink-0 bg-[#2f3335] flex items-center justify-center"><Svg w={8} h={5}><path d="M.5.5L4 4 7.500.5" /></Svg></div>
    </div>
  )
}

export default function App() {
  return (
    <div className="w-[1280px] h-[720px] overflow-hidden flex flex-col bg-[#2e3234] font-['Open_Sans','Noto_Sans',sans-serif] select-none">
      <TopRow />
      <SecondRow />
      <div className="flex-1 min-h-0 flex border-t border-[#1a1d1f]">
        <div className="w-[7px] shrink-0 bg-[#25292b] border-r border-[#1a1d1f] flex items-center justify-center"><div className="w-[2px] h-[10px] border-l border-dotted border-[#0f1112]" /></div>
        <div className="flex-1 min-w-0 flex flex-col bg-[#25292b]">
          <TitleBar />
          <div className="flex-1 min-h-0 flex overflow-hidden">
            <Browser />
            <div className="w-[2px] shrink-0" />
            <TrackHeaders />
            <div className="w-[1028px] ml-[-1px] shrink-0 flex flex-col">
              <MiniMap />
              <Ruler />
              {tracks.map(t => <Lane key={t.name} track={t} />)}
              <Lane track={master} />
            </div>
            <ScrollColumn />
          </div>
        </div>
      </div>
    </div>
  )
}
